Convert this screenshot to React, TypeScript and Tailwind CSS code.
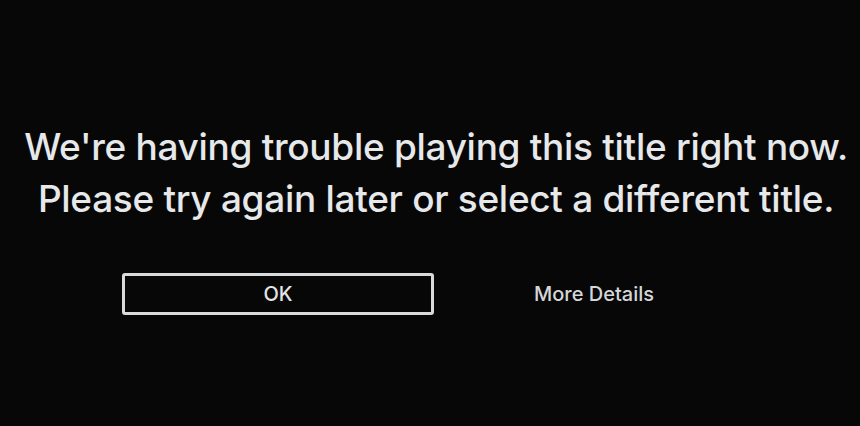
const App = () => {
  return (
    <main
      className="w-[860px] h-[426px] overflow-hidden bg-[#070707] text-[#e6e8ea] flex flex-col items-center pt-[121px] pl-[12px]"
      style={{ fontFamily: "Inter, 'Noto Sans', sans-serif" }}
    >
      <p className="text-[37px] leading-[52px] font-medium text-center tracking-[-0.3px]">
        We're having trouble playing this title right now.
        <br />
        Please try again later or select a different title.
      </p>
      <div className="flex gap-[4px] mt-[48px]">
        <button className="w-[312px] h-[42px] border-[3px] border-[#d8dadc] rounded-[3px] text-[20px] font-medium text-[#e2e4e6] flex items-center justify-center">
          OK
        </button>
        <button className="w-[312px] h-[42px] text-[20px] font-medium text-[#d4d6d8] flex items-center justify-center">
          More Details
        </button>
      </div>
    </main>
  );
};

export default App;
